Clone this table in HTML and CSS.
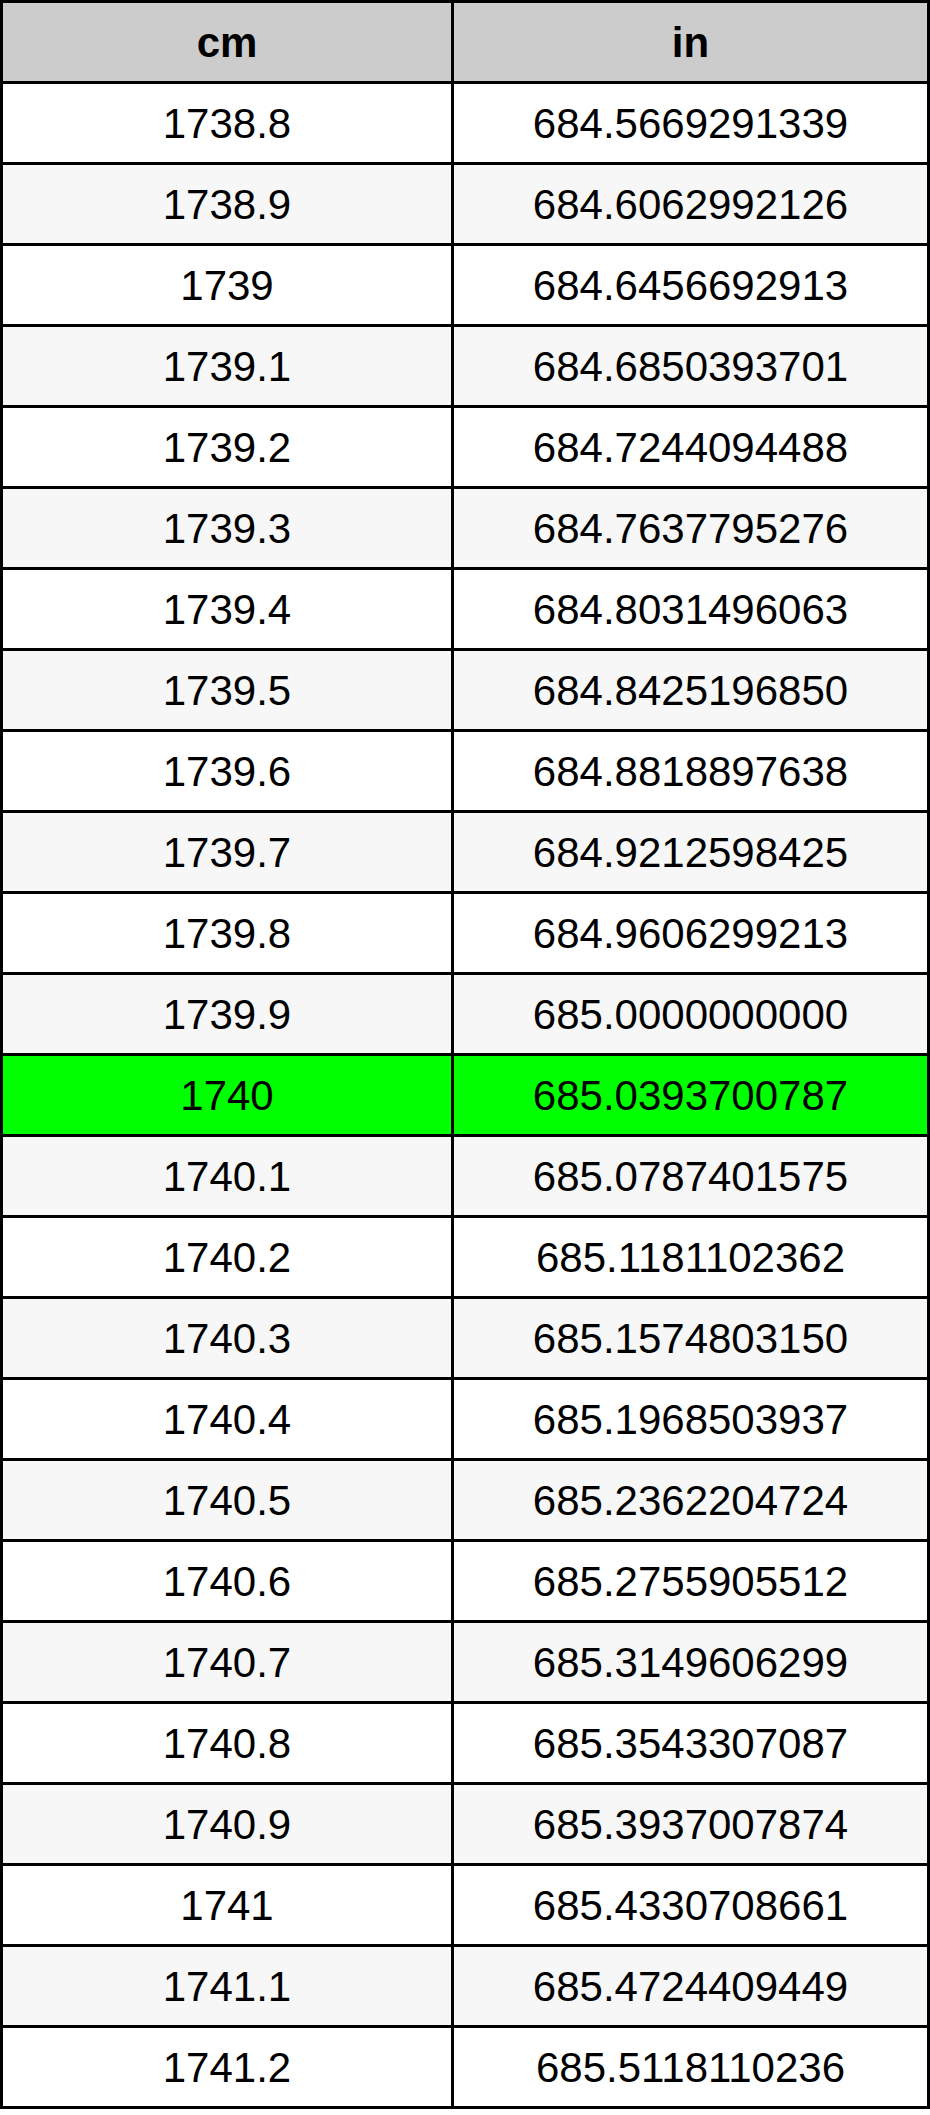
FILE: index.html
```html
<!DOCTYPE html>
<html>
<head>
<meta charset="utf-8">
<title>cm to in</title>
<link rel="stylesheet" href="styles.css">
</head>
<body>
<table class="conv">
<thead>
<tr><th class="c1">cm</th><th class="c2">in</th></tr>
</thead>
<tbody>
<tr><td>1738.8</td><td>684.5669291339</td></tr>
<tr class="alt"><td>1738.9</td><td>684.6062992126</td></tr>
<tr><td>1739</td><td>684.6456692913</td></tr>
<tr class="alt"><td>1739.1</td><td>684.6850393701</td></tr>
<tr><td>1739.2</td><td>684.7244094488</td></tr>
<tr class="alt"><td>1739.3</td><td>684.7637795276</td></tr>
<tr><td>1739.4</td><td>684.8031496063</td></tr>
<tr class="alt"><td>1739.5</td><td>684.8425196850</td></tr>
<tr><td>1739.6</td><td>684.8818897638</td></tr>
<tr class="alt"><td>1739.7</td><td>684.9212598425</td></tr>
<tr><td>1739.8</td><td>684.9606299213</td></tr>
<tr class="alt"><td>1739.9</td><td>685.0000000000</td></tr>
<tr class="hl"><td>1740</td><td>685.0393700787</td></tr>
<tr class="alt"><td>1740.1</td><td>685.0787401575</td></tr>
<tr><td>1740.2</td><td>685.1181102362</td></tr>
<tr class="alt"><td>1740.3</td><td>685.1574803150</td></tr>
<tr><td>1740.4</td><td>685.1968503937</td></tr>
<tr class="alt"><td>1740.5</td><td>685.2362204724</td></tr>
<tr><td>1740.6</td><td>685.2755905512</td></tr>
<tr class="alt"><td>1740.7</td><td>685.3149606299</td></tr>
<tr><td>1740.8</td><td>685.3543307087</td></tr>
<tr class="alt"><td>1740.9</td><td>685.3937007874</td></tr>
<tr><td>1741</td><td>685.4330708661</td></tr>
<tr class="alt"><td>1741.1</td><td>685.4724409449</td></tr>
<tr><td>1741.2</td><td>685.5118110236</td></tr>
</tbody>
</table>
</body>
</html>
```
FILE: styles.css
```css
html, body {
  margin: 0;
  padding: 0;
  background: #ffffff;
}

.conv {
  border-collapse: separate;
  border-spacing: 0;
  border-top: 3px solid #000;
  border-left: 3px solid #000;
  table-layout: fixed;
  width: 930px;
  font-family: "Liberation Sans", Arial, sans-serif;
  font-size: 42px;
  color: #000;
}

.conv th,
.conv td {
  border-right: 3px solid #000;
  border-bottom: 3px solid #000;
  padding: 3px 0 1px 0;
  height: 74px;
  line-height: 74px;
  text-align: center;
  white-space: nowrap;
  box-sizing: content-box;
}

.conv th {
  background: #cccccc;
  font-weight: bold;
}

.conv .c1 {
  width: 448px;
}

.conv .c2 {
  width: 473px;
}

.conv td {
  background: #ffffff;
  font-weight: normal;
}

.conv tr.alt td {
  background: #f7f7f7;
}

.conv tr.hl td {
  background: #00ff00;
}
```
